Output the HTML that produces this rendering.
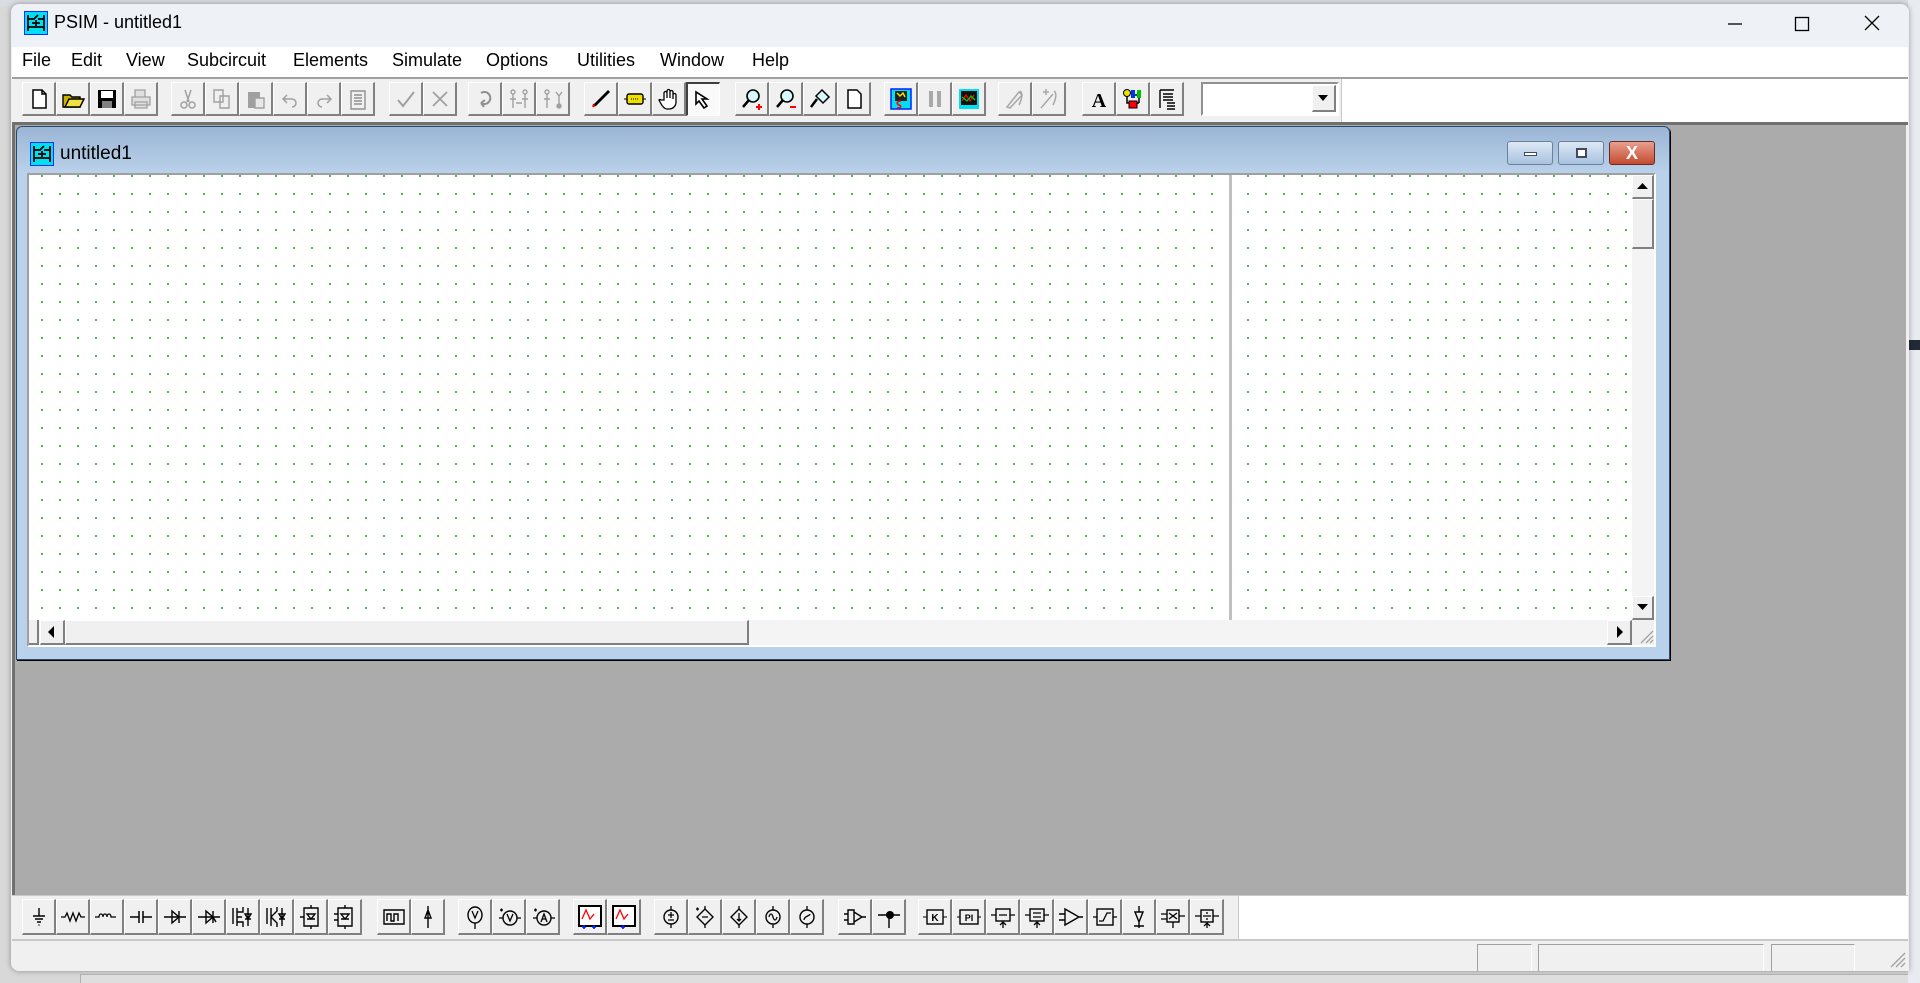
<!DOCTYPE html>
<html><head><meta charset="utf-8"><style>
*{margin:0;padding:0;box-sizing:border-box}
body{width:1920px;height:983px;overflow:hidden;background:#d8d8d8;font-family:"Liberation Sans",sans-serif;position:relative}
.abs{position:absolute}
.btn{position:absolute;width:34px;height:34px;background:#f0f0f0;border-top:1px solid #fff;border-left:1px solid #fff;border-right:2px solid #808080;border-bottom:2px solid #808080;display:flex;align-items:center;justify-content:center}
.btn svg{width:24px;height:24px}
.bb{position:absolute;width:34px;height:36px;background:#f0f0f0;border-top:1px solid #fff;border-left:1px solid #fff;border-right:2px solid #808080;border-bottom:2px solid #808080;display:flex;align-items:center;justify-content:center}
.bb svg{width:26px;height:26px}
.menu span{position:absolute;top:50px;font-size:18px;color:#000}
.dis{stroke:#a0a0a0}
</style></head><body>
<!-- background window strip at top -->
<div class="abs" style="left:0;top:0;width:1920px;height:6px;background:#d9dde3"></div>
<!-- right side desktop -->
<div class="abs" style="left:1908px;top:0;width:12px;height:983px;background:#e8ecf0"></div>
<div class="abs" style="left:1908px;top:340px;width:12px;height:10px;background:#222a35"></div>
<!-- main window -->
<div class="abs" style="left:11px;top:4px;width:1898px;height:967px;background:#f0f0f0;border-radius:8px 8px 0 8px;box-shadow:0 0 6px rgba(0,0,0,.35);overflow:hidden">
</div>
<!-- title bar -->
<div class="abs" style="left:12px;top:5px;width:1896px;height:42px;background:#eef2f7;border-radius:8px 8px 0 0"></div>
<svg class="abs" style="left:24px;top:11px" width="24" height="24" viewBox="0 0 24 24"><rect x="0.5" y="0.5" width="23" height="23" fill="#00e0f0" stroke="#1030ff"/><path d="M4 4v16M20 4v16M4 8h6l4-4M14 8h6M4 16h16M8 12h8M12 9v6" stroke="#000" stroke-width="1.8" fill="none"/></svg>
<div class="abs" style="left:54px;top:12px;font-size:18px;color:#000">PSIM - untitled1</div>
<svg class="abs" style="left:1727px;top:16px" width="16" height="16"><path d="M1 8h14" stroke="#000" stroke-width="1.3"/></svg>
<svg class="abs" style="left:1794px;top:16px" width="16" height="16"><rect x="1.5" y="1.5" width="13" height="13" fill="none" stroke="#000" stroke-width="1.3"/></svg>
<svg class="abs" style="left:1864px;top:15px" width="16" height="16"><path d="M1 1L15 15M15 1L1 15" stroke="#000" stroke-width="1.3"/></svg>
<!-- menu -->
<div class="abs" style="left:12px;top:47px;width:1896px;height:30px;background:#fff"></div>
<div class="menu"><span style="left:22px">File</span><span style="left:71px">Edit</span><span style="left:126px">View</span><span style="left:187px">Subcircuit</span><span style="left:293px">Elements</span><span style="left:392px">Simulate</span><span style="left:486px">Options</span><span style="left:577px">Utilities</span><span style="left:660px">Window</span><span style="left:752px">Help</span></div>
<div class="abs" style="left:12px;top:77px;width:1896px;height:2px;background:#a0a0a0"></div>
<div class="abs" style="left:12px;top:79px;width:1896px;height:43px;background:#fff"></div>
<div class="abs" style="left:12px;top:79px;width:1330px;height:43px;background:#f0f0f0;border-right:1px solid #c8c8c8"></div>
<!-- top toolbar buttons -->
<div class="btn" style="left:22px;top:82px"><svg viewBox="0 0 24 24"><path d="M6 3h9l4 4v14H6z M15 3v4h4" fill="#fff" stroke="#000" stroke-width="1.5"/></svg></div>
<div class="btn" style="left:56px;top:82px"><svg viewBox="0 0 24 24"><path d="M2 8h7l2 2h8v10H2z" fill="#c8b400" stroke="#000" stroke-width="1.4"/><path d="M4 20l4-8h15l-4 8z" fill="#f0e040" stroke="#000" stroke-width="1.4"/></svg></div>
<div class="btn" style="left:90px;top:82px"><svg viewBox="0 0 24 24"><rect x="3" y="3" width="18" height="18" fill="#000"/><rect x="6" y="4" width="12" height="7" fill="#fff"/><rect x="7" y="14" width="10" height="7" fill="#808080"/></svg></div>
<div class="btn" style="left:124px;top:82px"><svg viewBox="0 0 24 24"><path d="M6 3h10v7H6zM3 10h18v8H3zM6 15h12v6H6z" fill="#e0e0e0" stroke="#a0a0a0" stroke-width="1.3"/></svg></div>
<div class="btn" style="left:171px;top:82px"><svg viewBox="0 0 24 24"><path d="M9 3l4 12M15 3l-4 12" stroke="#a0a0a0" stroke-width="1.5"/><circle cx="8" cy="18" r="3" fill="none" stroke="#a0a0a0" stroke-width="1.5"/><circle cx="16" cy="18" r="3" fill="none" stroke="#a0a0a0" stroke-width="1.5"/></svg></div>
<div class="btn" style="left:205px;top:82px"><svg viewBox="0 0 24 24"><path d="M4 3h9v12H4zM10 9h9v12h-9z" fill="#f0f0f0" stroke="#a0a0a0" stroke-width="1.4"/></svg></div>
<div class="btn" style="left:239px;top:82px"><svg viewBox="0 0 24 24"><path d="M4 5h12v16H4z" fill="#a0a0a0"/><path d="M11 11h9v10h-9z" fill="#e8e8e8" stroke="#a0a0a0" stroke-width="1.4"/></svg></div>
<div class="btn" style="left:273px;top:82px"><svg viewBox="0 0 24 24"><path d="M9 8l-4 4 4 4M5 12h9a4 4 0 010 8" fill="none" stroke="#a0a0a0" stroke-width="1.5"/></svg></div>
<div class="btn" style="left:307px;top:82px"><svg viewBox="0 0 24 24"><path d="M15 8l4 4-4 4M19 12h-9a4 4 0 000 8" fill="none" stroke="#a0a0a0" stroke-width="1.5"/></svg></div>
<div class="btn" style="left:341px;top:82px"><svg viewBox="0 0 24 24"><path d="M5 4h14v18H5z M8 8h8M8 11h8M8 14h8M8 17h8" fill="#f0f0f0" stroke="#909090" stroke-width="1.4"/></svg></div>
<div class="btn" style="left:389px;top:82px"><svg viewBox="0 0 24 24"><path d="M4 13l5 6L20 5" fill="none" stroke="#a0a0a0" stroke-width="2"/></svg></div>
<div class="btn" style="left:423px;top:82px"><svg viewBox="0 0 24 24"><path d="M5 5l14 14M19 5L5 19" stroke="#a0a0a0" stroke-width="1.8"/></svg></div>
<div class="btn" style="left:468px;top:82px"><svg viewBox="0 0 24 24"><path d="M8 6a6 6 0 110 10M8 16l4-3M8 16l3 4" fill="none" stroke="#909090" stroke-width="2"/></svg></div>
<div class="btn" style="left:502px;top:82px"><svg viewBox="0 0 24 24"><g stroke="#a0a0a0" stroke-width="1.4" fill="none"><circle cx="6" cy="5" r="2"/><circle cx="18" cy="5" r="2"/><path d="M6 7v14M18 7v14M3 12h6M15 12h6M9 16h6"/></g></svg></div>
<div class="btn" style="left:536px;top:82px"><svg viewBox="0 0 24 24"><g stroke="#a0a0a0" stroke-width="1.4" fill="none"><circle cx="6" cy="5" r="2"/><path d="M6 7v14M3 12h6M15 5l3 4 3-4M18 9v8"/><circle cx="18" cy="19" r="2" fill="#a0a0a0"/></g></svg></div>
<div class="btn" style="left:584px;top:82px"><svg viewBox="0 0 24 24"><path d="M19 3l2 2L7 19l-3 1 1-3z" fill="#000"/><path d="M4 20l1-3" stroke="red" stroke-width="2"/></svg></div>
<div class="btn" style="left:618px;top:82px"><svg viewBox="0 0 24 24"><rect x="4" y="7" width="16" height="10" rx="2" fill="#f0e000" stroke="#000" stroke-width="1.4"/><path d="M8 12h8" stroke="#000" stroke-dasharray="1 1"/><path d="M1 12h3M20 12h3" stroke="#000"/></svg></div>
<div class="btn" style="left:652px;top:82px"><svg viewBox="0 0 24 24"><path d="M7 13V6a1.5 1.5 0 013 0v5V4a1.5 1.5 0 013 0v7V5a1.5 1.5 0 013 0v7-4a1.5 1.5 0 013 0v7c0 4-3 7-7 7h-2c-3 0-5-3-7-7l-1-2c1-1 2 0 2 0z" fill="#fff" stroke="#000" stroke-width="1.3"/></svg></div>
<div class="btn" style="left:686px;top:82px;background:#fafafa;border-top:2px solid #404040;border-left:2px solid #404040;border-right:1px solid #fff;border-bottom:1px solid #fff"><svg viewBox="0 0 24 24"><path d="M4 4v12l3-3 5 7 3-2-5-7h5z" fill="#fff" stroke="#000" stroke-width="1.6"/></svg></div>
<div class="btn" style="left:735px;top:82px"><svg viewBox="0 0 24 24"><circle cx="13" cy="9" r="6" fill="#d8f8ff" stroke="#000" stroke-width="1.6"/><path d="M9 13l-6 7" stroke="#000" stroke-width="2.5"/><path d="M16 20h6M19 17v6" stroke="red" stroke-width="2"/></svg></div>
<div class="btn" style="left:769px;top:82px"><svg viewBox="0 0 24 24"><circle cx="13" cy="9" r="6" fill="#d8f8ff" stroke="#000" stroke-width="1.6"/><path d="M9 13l-6 7" stroke="#000" stroke-width="2.5"/><path d="M16 20h6" stroke="red" stroke-width="2"/></svg></div>
<div class="btn" style="left:803px;top:82px"><svg viewBox="0 0 24 24"><path d="M14 3l7 7-6 6-7-7z" fill="#d8f8ff" stroke="#000" stroke-width="1.5"/><path d="M9 12l-6 8" stroke="#000" stroke-width="2.5"/></svg></div>
<div class="btn" style="left:837px;top:82px"><svg viewBox="0 0 24 24"><path d="M6 3h9l4 4v14H6z" fill="#fff" stroke="#000" stroke-width="1.5"/></svg></div>
<div class="btn" style="left:884px;top:82px"><svg viewBox="0 0 24 24"><rect x="2" y="2" width="20" height="20" fill="#00e0f0" stroke="#0020ff" stroke-width="1.5"/><rect x="6" y="4" width="12" height="10" fill="#202020"/><path d="M8 6l3 3 3-3 2 4" stroke="#f0e000" stroke-width="1.5" fill="none"/><path d="M12 14c-4 0-5 3-2 4s2 3-2 3" stroke="red" stroke-width="1.6" fill="none"/></svg></div>
<div class="btn" style="left:918px;top:82px"><svg viewBox="0 0 24 24"><rect x="6" y="4" width="4" height="16" fill="#a8a8a8"/><rect x="14" y="4" width="4" height="16" fill="#a8a8a8"/></svg></div>
<div class="btn" style="left:952px;top:82px"><svg viewBox="0 0 24 24"><rect x="2" y="2" width="20" height="20" fill="#00e0f0"/><rect x="4" y="4" width="16" height="14" fill="#101010"/><path d="M5 14l4-6 4 6 4-6" stroke="red" stroke-width="1.3" fill="none"/><path d="M5 10l5 4 4-5 4 4" stroke="#00d000" stroke-width="1.3" fill="none"/></svg></div>
<div class="btn" style="left:998px;top:82px"><svg viewBox="0 0 24 24"><path d="M4 20L16 5l3 3L7 21z M17 4c3 2 2 8-1 14" fill="none" stroke="#a8a8a8" stroke-width="1.5"/></svg></div>
<div class="btn" style="left:1032px;top:82px"><svg viewBox="0 0 24 24"><path d="M4 21L16 7M6 5h6M9 2v6M17 4c3 2 2 8-1 14" fill="none" stroke="#a8a8a8" stroke-width="1.5"/></svg></div>
<div class="btn" style="left:1082px;top:82px"><svg viewBox="0 0 24 24"><text x="12" y="20" text-anchor="middle" font-family="Liberation Serif,serif" font-size="20" font-weight="bold">A</text></svg></div>
<div class="btn" style="left:1116px;top:82px"><svg viewBox="0 0 24 24"><path d="M6 8v8h12M12 8h6v8" stroke="#000" stroke-width="1.5" fill="none"/><circle cx="6" cy="6" r="3.5" fill="#f0e000" stroke="#000"/><rect x="10" y="3" width="4" height="8" fill="#0030ff"/><rect x="16" y="3" width="4" height="8" fill="#00c000"/><rect x="8" y="14" width="8" height="7" fill="red" stroke="#000"/></svg></div>
<div class="btn" style="left:1150px;top:82px"><svg viewBox="0 0 24 24"><path d="M5 3h14M5 3v18M8 7h10M8 10h10M8 13h10M12 16h8M12 19h8M12 22h8" stroke="#000" stroke-width="1.4"/></svg></div>
<!-- combo -->
<div class="abs" style="left:1201px;top:82px;width:138px;height:34px;border:2px solid #909090;border-right-color:#fff;border-bottom-color:#fff;background:#fff"></div>
<div class="abs" style="left:1312px;top:85px;width:24px;height:27px;background:#f0f0f0;border-right:2px solid #808080;border-bottom:2px solid #808080;border-top:1px solid #fff;border-left:1px solid #fff"><svg width="20" height="24"><path d="M5 9h10l-5 6z" fill="#000"/></svg></div>
<!-- MDI area -->
<div class="abs" style="left:12px;top:122px;width:1896px;height:3px;background:#707070"></div>
<div class="abs" style="left:12px;top:125px;width:3px;height:770px;background:#707070"></div>
<div class="abs" style="left:15px;top:125px;width:1891px;height:770px;background:#ababab"></div>
<!-- child window -->
<div class="abs" style="left:16px;top:126px;width:1654px;height:534px;background:linear-gradient(#9bb5d5,#b9d1ea 46px);border:1px solid #2a4a6a;border-radius:6px 6px 0 0;box-shadow:1px 1px 0 #000"></div>
<svg class="abs" style="left:30px;top:142px" width="24" height="24" viewBox="0 0 24 24"><rect x="0.5" y="0.5" width="23" height="23" fill="#00e0f0" stroke="#1030ff"/><path d="M4 4v16M20 4v16M4 8h6l4-4M14 8h6M4 16h16M8 12h8M12 9v6" stroke="#000" stroke-width="1.8" fill="none"/></svg>
<div class="abs" style="left:60px;top:143px;font-size:19px;color:#000">untitled1</div>
<div class="abs" style="left:1507px;top:141px;width:46px;height:24px;border:1px solid #6d7f99;border-radius:3px;background:linear-gradient(#dce8f5,#a9c2e0)"><div style="position:absolute;left:16px;top:10px;width:13px;height:4px;background:#fff;border:1px solid #404a5a"></div></div>
<div class="abs" style="left:1558px;top:141px;width:46px;height:24px;border:1px solid #6d7f99;border-radius:3px;background:linear-gradient(#dce8f5,#a9c2e0)"><div style="position:absolute;left:17px;top:6px;width:11px;height:10px;background:#fff;border:2px solid #404a5a"></div></div>
<div class="abs" style="left:1609px;top:141px;width:46px;height:24px;border:1px solid #6a2a20;border-radius:3px;background:linear-gradient(#e8a090,#c44a30);color:#fff;font-weight:bold;font-size:18px;text-align:center;line-height:22px">X</div>
<!-- canvas -->
<div class="abs" style="left:27px;top:173px;width:1629px;height:474px;border:2px solid #a0a0a0;border-right-color:#fff;border-bottom-color:#fff;background:#f0f0f0"></div>
<div class="abs" style="left:29px;top:175px;width:1603px;height:445px;background-color:#fff;background-image:radial-gradient(circle,#30b030 0.9px,transparent 1.2px);background-size:18px 18px;background-position:40px 10px"></div>
<div class="abs" style="left:1229px;top:175px;width:3px;height:445px;background:#c0c0c0"></div>
<!-- v scrollbar -->
<div class="abs" style="left:1632px;top:175px;width:22px;height:445px;background:#f4f4f4"></div>
<div class="abs" style="left:1632px;top:175px;width:22px;height:24px;background:#f0f0f0;border-right:2px solid #808080;border-bottom:2px solid #808080;border-top:1px solid #fff;border-left:1px solid #fff"><svg width="19" height="20"><path d="M4 13h11l-5.5-6z" fill="#000"/></svg></div>
<div class="abs" style="left:1632px;top:199px;width:22px;height:50px;background:#f0f0f0;border-right:2px solid #808080;border-bottom:2px solid #808080;border-top:1px solid #fff;border-left:1px solid #fff"></div>
<div class="abs" style="left:1632px;top:596px;width:22px;height:24px;background:#f0f0f0;border-right:2px solid #808080;border-bottom:2px solid #808080;border-top:1px solid #fff;border-left:1px solid #fff"><svg width="19" height="20"><path d="M4 7h11l-5.5 6z" fill="#000"/></svg></div>
<!-- h scrollbar -->
<div class="abs" style="left:29px;top:620px;width:1603px;height:25px;background:#f4f4f4"></div>
<div class="abs" style="left:29px;top:620px;width:10px;height:25px;background:#f0f0f0;border-right:2px solid #808080;border-bottom:2px solid #808080"></div>
<div class="abs" style="left:40px;top:620px;width:25px;height:25px;background:#f0f0f0;border-right:2px solid #808080;border-bottom:2px solid #808080;border-top:1px solid #fff;border-left:1px solid #fff"><svg width="22" height="22"><path d="M13 5v12l-6-6z" fill="#000"/></svg></div>
<div class="abs" style="left:65px;top:620px;width:684px;height:25px;background:#f0f0f0;border-right:2px solid #808080;border-bottom:2px solid #808080;border-top:1px solid #fff;border-left:1px solid #fff"></div>
<div class="abs" style="left:1607px;top:620px;width:25px;height:25px;background:#f0f0f0;border-right:2px solid #808080;border-bottom:2px solid #808080;border-top:1px solid #fff;border-left:1px solid #fff"><svg width="22" height="22"><path d="M9 5v12l6-6z" fill="#000"/></svg></div>
<svg class="abs" style="left:1638px;top:628px" width="16" height="16"><path d="M15 3L3 15M15 8L8 15M15 12l-3 3" stroke="#a0a0a0" stroke-width="1.3"/></svg>
<!-- bottom toolbar -->
<div class="abs" style="left:12px;top:895px;width:1896px;height:44px;background:#fff;border-top:1px solid #c8c8c8"></div>
<div class="abs" style="left:12px;top:896px;width:1227px;height:43px;background:#f0f0f0;border-right:1px solid #c8c8c8"></div>
<div id="bt"></div>
<!-- status bar -->
<div class="abs" style="left:12px;top:939px;width:1896px;height:2px;background:#c8c8c8"></div>
<div class="abs" style="left:12px;top:941px;width:1896px;height:30px;background:#f0f0f0;border-radius:0 0 8px 8px"></div>
<div class="abs" style="left:1477px;top:944px;width:55px;height:27px;border-left:1px solid #a0a0a0;border-top:1px solid #a0a0a0;border-right:1px solid #fff"></div>
<div class="abs" style="left:1538px;top:944px;width:226px;height:27px;border-left:1px solid #a0a0a0;border-top:1px solid #a0a0a0;border-right:1px solid #fff"></div>
<div class="abs" style="left:1771px;top:944px;width:84px;height:27px;border-left:1px solid #a0a0a0;border-top:1px solid #a0a0a0;border-right:1px solid #fff"></div>
<svg class="abs" style="left:1888px;top:950px" width="18" height="18"><path d="M17 3L3 17M17 8L8 17M17 13l-4 4" stroke="#a0a0a0" stroke-width="1.3"/></svg>
<div class="abs" style="left:80px;top:974px;width:1828px;height:9px;border-left:1px solid #b0b0b0;border-top:1px solid #b0b0b0;background:#dedede"></div>

<!-- bottom buttons -->
<div class="bb" style="left:22px;top:899px"><svg viewBox="0 0 26 26"><path d="M13 4v8M7 12h12M9 15h8M11 18h4M12.5 21h1" stroke="#000" stroke-width="1.4"/></svg></div>
<div class="bb" style="left:56px;top:899px"><svg viewBox="0 0 26 26"><path d="M1 13h4l2-4 3 8 3-8 3 8 3-8 2 4h4" stroke="#000" stroke-width="1.3" fill="none"/></svg></div>
<div class="bb" style="left:90px;top:899px"><svg viewBox="0 0 26 26"><path d="M1 13h4c0-4 4-4 4 0 0-4 4-4 4 0 0-4 4-4 4 0h5" stroke="#000" stroke-width="1.3" fill="none"/></svg></div>
<div class="bb" style="left:124px;top:899px"><svg viewBox="0 0 26 26"><path d="M2 13h9M15 13h9M11 7v12M15 7v12" stroke="#000" stroke-width="1.5"/></svg></div>
<div class="bb" style="left:158px;top:899px"><svg viewBox="0 0 26 26"><path d="M2 13h22M10 7v12l7-6zM17 7v12" stroke="#000" stroke-width="1.4" fill="none"/></svg></div>
<div class="bb" style="left:192px;top:899px"><svg viewBox="0 0 26 26"><path d="M2 13h22M10 7v12l7-6zM17 7v12M17 13l3 5" stroke="#000" stroke-width="1.4" fill="none"/></svg></div>
<div class="bb" style="left:226px;top:899px"><svg viewBox="0 0 26 26"><path d="M3 4v16M7 4v18M7 8h6v-5M7 18h6v5M7 13h5M18 4v18M15 10h6l-3 5zM15 15h6" stroke="#000" stroke-width="1.4" fill="none"/></svg></div>
<div class="bb" style="left:260px;top:899px"><svg viewBox="0 0 26 26"><path d="M3 4v16M7 4v18M7 13l6-6v-4M7 13l6 6v4M18 4v18M15 10h6l-3 5zM15 15h6" stroke="#000" stroke-width="1.4" fill="none"/></svg></div>
<div class="bb" style="left:294px;top:899px"><svg viewBox="0 0 26 26"><path d="M6 4h14v18H6zM13 1v3M13 22v3M9 10h8l-4 5zM9 15h8M2 13h4" stroke="#000" stroke-width="1.4" fill="none"/></svg></div>
<div class="bb" style="left:328px;top:899px"><svg viewBox="0 0 26 26"><path d="M6 4h14v18H6zM13 1v3M13 22v3M9 10h8l-4 5zM9 15h8M2 10h4M2 16h4" stroke="#000" stroke-width="1.4" fill="none"/></svg></div>
<div class="bb" style="left:377px;top:899px"><svg viewBox="0 0 26 26"><path d="M3 6h20v14H3zM6 17v-7h4v7h3v-7h4v7" stroke="#000" stroke-width="1.4" fill="none"/></svg></div>
<div class="bb" style="left:411px;top:899px"><svg viewBox="0 0 26 26"><path d="M13 2v22M13 6l-3 8h6z" stroke="#000" stroke-width="1.4" fill="none"/></svg></div>
<div class="bb" style="left:458px;top:899px"><svg viewBox="0 0 26 26"><ellipse cx="13" cy="11" rx="7" ry="8" stroke="#000" stroke-width="1.4" fill="none"/><path d="M13 19v6M10 7l3 7 3-7" stroke="#000" stroke-width="1.3" fill="none"/></svg></div>
<div class="bb" style="left:492px;top:899px"><svg viewBox="0 0 26 26"><circle cx="14" cy="14" r="7" stroke="#000" stroke-width="1.4" fill="none"/><path d="M3 14h4M21 14h4M11 10l3 7 3-7M4 6h3M5.5 4.5v3" stroke="#000" stroke-width="1.3" fill="none"/></svg></div>
<div class="bb" style="left:526px;top:899px"><svg viewBox="0 0 26 26"><circle cx="14" cy="14" r="7" stroke="#000" stroke-width="1.4" fill="none"/><path d="M3 14h4M21 14h4M11 18l3-8 3 8M12 15h4M4 6h3M5.5 4.5v3" stroke="#000" stroke-width="1.3" fill="none"/></svg></div>
<div class="bb" style="left:573px;top:899px"><svg viewBox="0 0 26 26"><rect x="2" y="2" width="22" height="20" fill="#fff" stroke="#000" stroke-width="2"/><path d="M5 15l4-9 4 9 4-5" stroke="red" stroke-width="1.3" fill="none"/><path d="M7 25v-4M17 25v-4M5 23h4M15 23h4" stroke="#0020ff" stroke-width="1.6"/></svg></div>
<div class="bb" style="left:607px;top:899px"><svg viewBox="0 0 26 26"><rect x="2" y="2" width="22" height="20" fill="#fff" stroke="#000" stroke-width="2"/><path d="M5 15l4-9 4 9 4-5" stroke="red" stroke-width="1.3" fill="none"/><path d="M12 25v-4M10 23h4" stroke="#0020ff" stroke-width="1.6"/></svg></div>
<div class="bb" style="left:654px;top:899px"><svg viewBox="0 0 26 26"><circle cx="13" cy="13" r="7" stroke="#000" stroke-width="1.4" fill="none"/><path d="M13 2v4M13 20v4M10 11h6M13 8v6M10 16h6" stroke="#000" stroke-width="1.3"/></svg></div>
<div class="bb" style="left:688px;top:899px"><svg viewBox="0 0 26 26"><path d="M13 5l8 8-8 8-8-8z" stroke="#000" stroke-width="1.4" fill="none"/><path d="M13 2v3M13 21v3M10 13h6M4 5h3M5.5 3.5v3" stroke="#000" stroke-width="1.3"/></svg></div>
<div class="bb" style="left:722px;top:899px"><svg viewBox="0 0 26 26"><path d="M13 5l8 8-8 8-8-8z" stroke="#000" stroke-width="1.4" fill="none"/><path d="M13 2v3M13 21v3M13 9v8M11 15l2 2 2-2" stroke="#000" stroke-width="1.3" fill="none"/></svg></div>
<div class="bb" style="left:756px;top:899px"><svg viewBox="0 0 26 26"><circle cx="13" cy="13" r="7" stroke="#000" stroke-width="1.4" fill="none"/><path d="M13 2v4M13 20v4M9 13c1-4 3-4 4 0s3 4 4 0" stroke="#000" stroke-width="1.3" fill="none"/></svg></div>
<div class="bb" style="left:790px;top:899px"><svg viewBox="0 0 26 26"><circle cx="13" cy="13" r="7" stroke="#000" stroke-width="1.4" fill="none"/><path d="M13 2v4M13 20v4M10 16c0-4 6-4 6-6" stroke="#000" stroke-width="1.3" fill="none"/></svg></div>
<div class="bb" style="left:838px;top:899px"><svg viewBox="0 0 26 26"><path d="M6 6h6v14H6zM12 8l8 5-8 5M20 13h4M2 10h4M2 16h4" stroke="#000" stroke-width="1.4" fill="none"/></svg></div>
<div class="bb" style="left:872px;top:899px"><svg viewBox="0 0 26 26"><path d="M2 11h22M13 11v13" stroke="#000" stroke-width="1.4"/><circle cx="14" cy="11" r="4" fill="#000"/></svg></div>
<div class="bb" style="left:918px;top:899px"><svg viewBox="0 0 26 26"><rect x="5" y="6" width="16" height="14" stroke="#000" stroke-width="1.4" fill="none"/><text x="13" y="17" text-anchor="middle" font-size="10" font-weight="bold">K</text><path d="M1 13h4M21 13h4" stroke="#000"/></svg></div>
<div class="bb" style="left:952px;top:899px"><svg viewBox="0 0 26 26"><rect x="4" y="6" width="18" height="14" stroke="#000" stroke-width="1.4" fill="none"/><text x="13" y="17" text-anchor="middle" font-size="9" font-weight="bold">PI</text><path d="M1 13h3M22 13h3" stroke="#000"/></svg></div>
<div class="bb" style="left:986px;top:899px"><svg viewBox="0 0 26 26"><rect x="6" y="5" width="14" height="12" stroke="#000" stroke-width="1.4" fill="none"/><path d="M9 11h8M1 11h5M20 11h5M13 17v7M10 21l3-3 3 3" stroke="#000" stroke-width="1.3" fill="none"/></svg></div>
<div class="bb" style="left:1020px;top:899px"><svg viewBox="0 0 26 26"><rect x="6" y="5" width="14" height="12" stroke="#000" stroke-width="1.4" fill="none"/><path d="M9 9h8M9 13h8M1 11h5M20 11h5M13 17v7M10 21l3-3 3 3" stroke="#000" stroke-width="1.3" fill="none"/></svg></div>
<div class="bb" style="left:1054px;top:899px"><svg viewBox="0 0 26 26"><path d="M7 5v16l14-8zM1 10h6M1 16h6M21 13h4" stroke="#000" stroke-width="1.4" fill="none"/></svg></div>
<div class="bb" style="left:1088px;top:899px"><svg viewBox="0 0 26 26"><rect x="5" y="5" width="16" height="16" stroke="#000" stroke-width="1.4" fill="none"/><path d="M7 17h4l4-8h4M1 13h4M21 13h4" stroke="#000" stroke-width="1.3" fill="none"/></svg></div>
<div class="bb" style="left:1122px;top:899px"><svg viewBox="0 0 26 26"><path d="M13 2v6M9 8l4 10 4-10zM13 18v6M8 22h10" stroke="#000" stroke-width="1.4" fill="none"/></svg></div>
<div class="bb" style="left:1156px;top:899px"><svg viewBox="0 0 26 26"><rect x="7" y="6" width="12" height="12" stroke="#000" stroke-width="1.4" fill="none"/><path d="M9 9l8 6M17 9l-8 6M1 10h6M1 15h6M19 12h6M13 18v6" stroke="#000" stroke-width="1.3"/></svg></div>
<div class="bb" style="left:1190px;top:899px"><svg viewBox="0 0 26 26"><rect x="7" y="6" width="12" height="12" stroke="#000" stroke-width="1.4" fill="none"/><path d="M9 12h8M13 8v2M13 14v2M1 12h6M19 12h6M13 18v6M10 22l3-3 3 3" stroke="#000" stroke-width="1.3" fill="none"/></svg></div>
</body></html>
